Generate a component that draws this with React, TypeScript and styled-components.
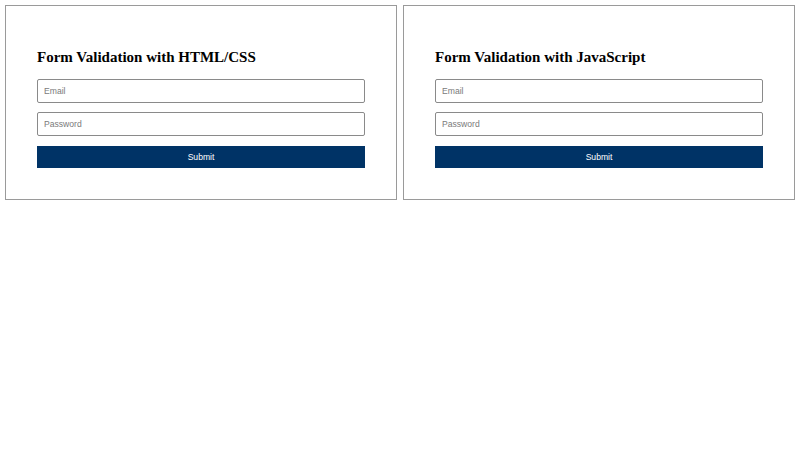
import React from "react";
import styled, { createGlobalStyle } from "styled-components";

const Global = createGlobalStyle`
  html, body { margin: 0; padding: 0; background: #ffffff; }
  body { font-family: "Liberation Sans", Arial, sans-serif; }
  * { box-sizing: border-box; }
`;

const Page = styled.div`
  display: flex;
  gap: 6px;
  padding: 5px;
  align-items: flex-start;
`;

const Card = styled.section`
  width: 392px;
  height: 195px;
  border: 1px solid #9a9a9a;
  padding: 31px;
  display: flex;
  flex-direction: column;
`;

const Title = styled.h2`
  margin: 12px 0 13px;
  font-family: "Liberation Serif", "Times New Roman", serif;
  font-weight: bold;
  font-size: 15px;
  line-height: 17px;
  color: #000;
`;

const Form = styled.form`
  display: flex;
  flex-direction: column;
`;

const Input = styled.input`
  width: 328px;
  height: 24px;
  margin: 0 0 ${(p) => p.$gap}px;
  padding: 0 6px;
  border: 1px solid #8a8a8a;
  border-radius: 2px;
  font-family: "Liberation Sans", Arial, sans-serif;
  font-size: 8.6px;
  color: #222;
  background: #fff;
  outline: none;
  &::placeholder { color: #7a7a7a; }
`;

const Submit = styled.button`
  width: 328px;
  height: 22px;
  border: none;
  margin: 0;
  padding: 0;
  background: #003366;
  color: #ffffff;
  font-family: "Liberation Sans", Arial, sans-serif;
  font-size: 8.6px;
  cursor: pointer;
`;

const FormCard: React.FC<{ title: string }> = ({ title }) => (
  <Card>
    <Title>{title}</Title>
    <Form onSubmit={(e) => e.preventDefault()}>
      <Input type="email" placeholder="Email" $gap={9} />
      <Input type="password" placeholder="Password" $gap={10} />
      <Submit type="submit">Submit</Submit>
    </Form>
  </Card>
);

export default function App() {
  return (
    <>
      <Global />
      <Page>
        <FormCard title="Form Validation with HTML/CSS" />
        <FormCard title="Form Validation with JavaScript" />
      </Page>
    </>
  );
}
